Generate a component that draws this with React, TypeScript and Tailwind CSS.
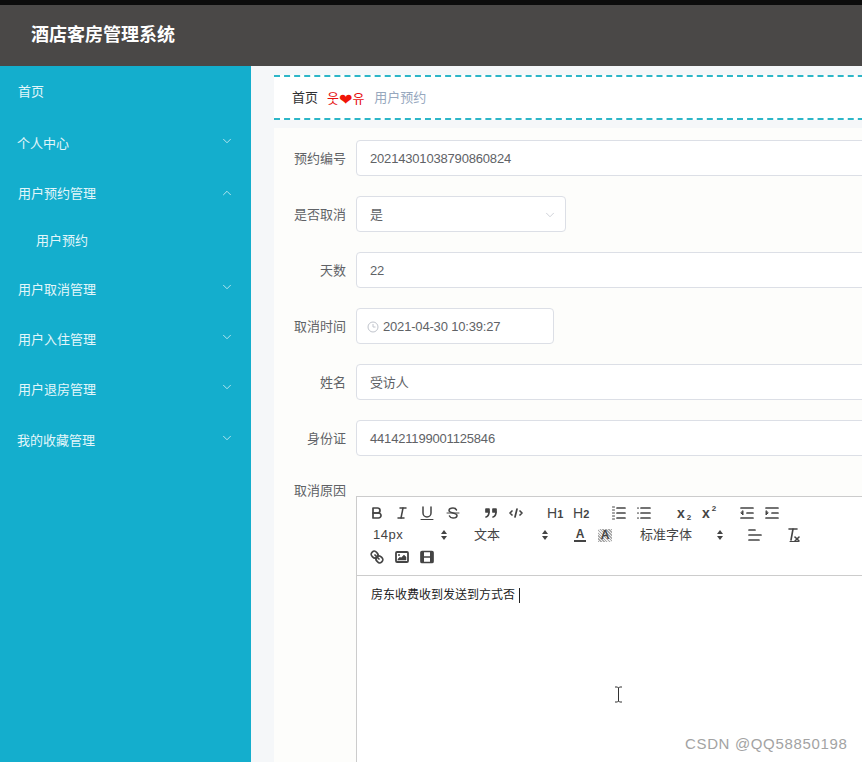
import { ChevronDown, ChevronUp } from "lucide-react";
import type { ReactNode } from "react";

const FONT = "font-['Liberation_Sans','Noto_Sans_CJK_SC',sans-serif]";

const MENU = [
  { label: "首页", h: "h-[52px]", pb: "pb-[2px]", x: "pl-[18px]" },
  { label: "个人中心", h: "h-[50px]", pb: "", x: "pl-[17px]", arrow: "down" },
  { label: "用户预约管理", h: "h-[50px]", pb: "", x: "pl-[18px]", arrow: "up" },
  { label: "用户预约", h: "h-[46px]", pb: "pb-[2px]", x: "pl-[36px]" },
  { label: "用户取消管理", h: "h-[50px]", pb: "", x: "pl-[18px]", arrow: "down" },
  { label: "用户入住管理", h: "h-[50px]", pb: "", x: "pl-[18px]", arrow: "down" },
  { label: "用户退房管理", h: "h-[50px]", pb: "", x: "pl-[18px]", arrow: "down" },
  { label: "我的收藏管理", h: "h-[52px]", pb: "", x: "pl-[17px]", arrow: "down" },
];

function Q({ children }: { children: ReactNode }) {
  return (
    <svg className="w-[18px] h-[18px] shrink-0" viewBox="0 0 18 18" fill="none" stroke="#444" strokeWidth="1.700" strokeLinecap="round" strokeLinejoin="round">
      {children}
    </svg>
  );
}

function Sort() {
  return (
    <svg className="w-[8px] h-[10px]" viewBox="0 0 8 10" fill="#444">
      <polygon points="4,0 7,4 1,4" /><polygon points="4,10 7,6 1,6" />
    </svg>
  );
}

function Field({ label, labelCls = "pt-[1px]", children }: { label: string; labelCls?: string; children: ReactNode }) {
  return (
    <div className="flex mb-[20px]">
      <div className={`w-[72px] h-[36px] leading-[36px] text-right text-[13px] text-[#606266] shrink-0 ${labelCls}`}>{label}</div>
      <div className="ml-[10px]">{children}</div>
    </div>
  );
}

function Box({ children, w = "w-[640px]" }: { children: ReactNode; w?: string }) {
  return (
    <div className={`${w} h-[36px] flex items-center border border-[#dcdfe6] rounded-[4px] bg-white px-[13px] pt-[1px] text-[13px] tracking-[-0.18px] text-[#606266]`}>
      {children}
    </div>
  );
}

function Toolbar() {
  return (
    <div className="h-[79px] border-b border-[#ccc] pl-[11px] pt-[5px]">
      <div className="flex items-center h-[22px] text-[#444]">
        <div className="w-[25px]"><Q><path d="M5,4H9.500A2.500,2.500,0,0,1,12,6.500v0A2.500,2.500,0,0,1,9.500,9H5V4Z" /><path d="M5,9h5.500A2.500,2.500,0,0,1,13,11.500v0A2.500,2.500,0,0,1,10.500,14H5V9Z" /></Q></div>
        <div className="w-[25px]"><Q><line x1="7" x2="13" y1="4" y2="4" strokeWidth="1.500" /><line x1="5" x2="11" y1="14" y2="14" strokeWidth="1.500" /><line x1="8" x2="10" y1="14" y2="4" strokeWidth="1.500" /></Q></div>
        <div className="w-[26px]"><Q><path d="M5,3V9a4,4,0,0,0,4,4H9a4,4,0,0,0,4-4V3" strokeWidth="1.500" /><line x1="3" x2="15" y1="15.500" y2="15.500" strokeWidth="1" /></Q></div>
        <div className="w-[38px]"><Q><line x1="3" x2="15" y1="9" y2="9" strokeWidth="1" /><path d="M12.500,6C12,4.700,10.500,4,9,4C7,4,5,5,5,6.500S7,8.500,9,9s4,1,4,2.500S11,14,9,14c-1.500,0-3-.7-3.500-2" strokeWidth="1.500" /></Q></div>
        <div className="w-[25px]"><Q><rect height="3" width="3" x="4" y="5" fill="#444" /><rect height="3" width="3" x="11" y="5" fill="#444" /><path d="M7,8c0,4-3,5-3,5" /><path d="M14,8c0,4-3,5-3,5" /></Q></div>
        <div className="w-[40px]"><Q><polyline points="5 7 3 9 5 11" /><polyline points="13 7 15 9 13 11" /><line x1="10" x2="8" y1="5" y2="13" /></Q></div>
        <div className="w-[26px] text-[14px] leading-none flex items-baseline">H<span className="text-[11px] font-semibold">1</span></div>
        <div className="w-[37px] text-[14px] leading-none flex items-baseline">H<span className="text-[11px] font-bold">2</span></div>
        <div className="w-[25px]"><Q><line x1="7" x2="15" y1="4" y2="4" /><line x1="7" x2="15" y1="9" y2="9" /><line x1="7" x2="15" y1="14" y2="14" /><line x1="2.500" x2="4.500" y1="3" y2="3" strokeWidth="1" /><line x1="2.500" x2="4.500" y1="6" y2="6" strokeWidth="1" /><line x1="2.500" x2="4.500" y1="9" y2="9" strokeWidth="1" /><line x1="2.500" x2="4.500" y1="12" y2="12" strokeWidth="1" /><line x1="2.500" x2="4.500" y1="15" y2="15" strokeWidth="1" /></Q></div>
        <div className="w-[41px]"><Q><line x1="6" x2="15" y1="4" y2="4" /><line x1="6" x2="15" y1="9" y2="9" /><line x1="6" x2="15" y1="14" y2="14" /><line x1="3" x2="3" y1="4" y2="4" /><line x1="3" x2="3" y1="9" y2="9" /><line x1="3" x2="3" y1="14" y2="14" /></Q></div>
        <div className="w-[25px] text-[14px] font-bold leading-none pl-[1px] flex items-baseline">x<span className="text-[8px] pl-[2px] translate-y-[2px]">2</span></div>
        <div className="w-[37px] text-[14px] font-bold leading-none pl-[1px] flex items-start">x<span className="text-[8px] pl-[2px] -translate-y-[1px]">2</span></div>
        <div className="w-[25px]"><Q><line x1="3" x2="15" y1="14" y2="14" /><line x1="3" x2="15" y1="4" y2="4" /><line x1="9" x2="15" y1="9" y2="9" /><polygon points="5 7 5 11 3 9" fill="#444" strokeWidth="1" /></Q></div>
        <div className="w-[25px]"><Q><line x1="3" x2="15" y1="14" y2="14" /><line x1="3" x2="15" y1="4" y2="4" /><line x1="9" x2="15" y1="9" y2="9" /><polygon points="3 7 3 11 5 9" fill="#444" strokeWidth="1" /></Q></div>
      </div>
      <div className="flex items-center h-[22px] text-[#444] text-[13px]">
        <div className="w-[80px] flex items-center justify-between pl-[5px]"><span className="tracking-[0.5px]">14px</span><Sort /></div>
        <div className="w-[101px] flex items-center justify-between pl-[26px]"><span>文本</span><Sort /></div>
        <div className="w-[14px] ml-[24px] flex flex-col items-center">
          <span className="text-[12px] font-bold leading-[12px]">A</span>
          <span className="w-[12px] h-[2px] bg-[#444]" />
        </div>
        <div className="w-[14px] ml-[11px] h-[13px] text-[12px] font-bold leading-[13px] text-center bg-[repeating-linear-gradient(45deg,#aaa_0,#aaa_1px,#eee_1px,#eee_2px)]">A</div>
        <div className="w-[112px] flex items-center justify-between pl-[28px]"><span className="whitespace-nowrap">标准字体</span><Sort /></div>
        <div className="ml-[22px] w-[38px]"><Q><line x1="3" x2="15" y1="9" y2="9" /><line x1="3" x2="13" y1="14" y2="14" /><line x1="3" x2="9" y1="4" y2="4" /></Q></div>
        <div className="w-[18px]"><Q><line x1="5" x2="13" y1="3" y2="3" strokeWidth="1.600" /><line x1="6" x2="14.500" y1="15.500" y2="15.500" strokeWidth="1" /><line x1="9" x2="7" y1="3" y2="14" strokeWidth="1.600" /><line x1="11" x2="15" y1="11" y2="15" strokeWidth="1.600" /><line x1="15" x2="11" y1="11" y2="15" strokeWidth="1.600" /></Q></div>
      </div>
      <div className="flex items-center h-[22px]">
        <div className="w-[25px]"><Q><line x1="7" x2="11" y1="7" y2="11" /><path d="M8.900,4.577a3.476,3.476,0,0,1,.36,4.679A3.476,3.476,0,0,1,4.577,8.900C3.185,7.500,2.035,6.400,4.217,4.217S7.500,3.185,8.900,4.577Z" /><path d="M13.423,9.100a3.476,3.476,0,0,0-4.679-.36,3.476,3.476,0,0,0,.36,4.679c1.392,1.392,2.500,2.542,4.679.36S14.815,10.500,13.423,9.100Z" /></Q></div>
        <div className="w-[25px]"><Q><rect height="10" width="12" x="3" y="4" rx="1" strokeWidth="1.800" /><circle cx="6" cy="7" r="1" fill="#444" strokeWidth="0" /><polyline points="5 12 5 11 7 9 8 10 11 7 13 9 13 12 5 12" fill="#444" strokeWidth="0.500" /></Q></div>
        <div className="w-[25px]"><Q><rect height="11" width="12" x="3" y="3.500" rx="1" /><rect x="3" y="3.500" width="3" height="11" fill="#444" strokeWidth="0" /><rect x="12" y="3.500" width="3" height="11" fill="#444" strokeWidth="0" /><line x1="6" x2="12" y1="9" y2="9" strokeWidth="1.500" /></Q></div>
      </div>
    </div>
  );
}

export default function App() {
  return (
    <div className={`relative w-[862px] h-[762px] overflow-hidden flex flex-col bg-[#f5f7f9] ${FONT}`}>
      <div className="h-[5px] bg-[#0c0c0c] shrink-0" />
      {/* Header */}
      <header className="h-[61px] shrink-0 bg-[#4a4847] flex items-center pl-[31px] text-white text-[18px] font-bold">
        酒店客房管理系统
      </header>
      <div className="flex flex-1 min-h-0">
        {/* Sidebar */}
        <aside className="w-[251px] shrink-0 bg-[#14aecd] pt-[1px] text-[13px] text-[#e3f6fa]">
          {MENU.map((m) => (
            <div key={m.label} className={`${m.h} ${m.pb} ${m.x} flex items-center justify-between pr-[17px]`}>
              <span>{m.label}</span>
              {m.arrow === "down" && <ChevronDown className="w-[14px] h-[14px] mb-[7px]" strokeWidth={1.3} />}
              {m.arrow === "up" && <ChevronUp className="w-[14px] h-[14px] mb-[2px]" strokeWidth={1.3} />}
            </div>
          ))}
        </aside>
        {/* Main */}
        <main className="flex-1 min-w-0 pl-[23px] pt-[9px] overflow-hidden">
          <div className="h-[45px] w-[620px] bg-white border-y-2 border-dashed border-[#2db6c8] flex items-center pl-[18px] text-[13px] whitespace-nowrap">
            <span className="text-[#303133]">首页</span>
            <span className="ml-[9px] mr-[10px] text-[#e60f0f] text-[13px] font-['Noto_Sans_CJK_KR','DejaVu_Sans',sans-serif] flex items-center">
              웃<span className="text-[#f01408] text-[16px] leading-none">❤</span>유
            </span>
            <span className="text-[#97a8be]">用户预约</span>
          </div>
          <div className="mt-[8px] w-[700px] h-[700px] bg-[#fdfdfb] pt-[12px]">
            <Field label="预约编号"><Box>20214301038790860824</Box></Field>
            <Field label="是否取消">
              <Box w="w-[210px]">
                <span className="flex-1">是</span>
                <ChevronDown className="w-[14px] h-[14px] -mr-[5px] text-[#c0c4cc]" strokeWidth={1.3} />
              </Box>
            </Field>
            <Field label="天数"><Box>22</Box></Field>
            <Field label="取消时间">
              <Box w="w-[198px]">
                <svg className="w-[12px] h-[12px] -ml-[3px] mr-[4px] shrink-0" viewBox="0 0 12 12" fill="none" stroke="#c0c4cc" strokeWidth="1">
                  <circle cx="6" cy="6" r="5" /><polyline points="6 3 6 6 8.500 6" />
                </svg>
                2021-04-30 10:39:27
              </Box>
            </Field>
            <Field label="姓名"><Box>受访人</Box></Field>
            <Field label="身份证"><Box>441421199001125846</Box></Field>
            <Field label="取消原因" labelCls="-mt-[3px]">
              <div className="mt-[20px] w-[640px] border border-[#ccc] bg-white">
                <Toolbar />
                <div className="h-[300px] px-[14px] pt-[10px] text-[12px] leading-[19px] text-[#222]">
                  房东收费收到发送到方式否<span className="inline-block w-px h-[15px] bg-[#222] ml-[4px] align-middle" />
                </div>
              </div>
            </Field>
          </div>
        </main>
      </div>
      {/* Mouse cursor from the recording */}
      <svg className="absolute left-[614px] top-[686px] w-[9px] h-[17px]" viewBox="0 0 9 17" fill="none" stroke="#333" strokeWidth="1">
        <path d="M1,1h2.500l1,1l1-1H8M4.500,2V15M1,16h2.500l1-1l1,1H8" />
      </svg>
      <div className="absolute left-[685px] top-[733px] text-[15px] tracking-[0.65px] text-[#a3a3a3] whitespace-nowrap">CSDN @QQ58850198</div>
    </div>
  );
}
